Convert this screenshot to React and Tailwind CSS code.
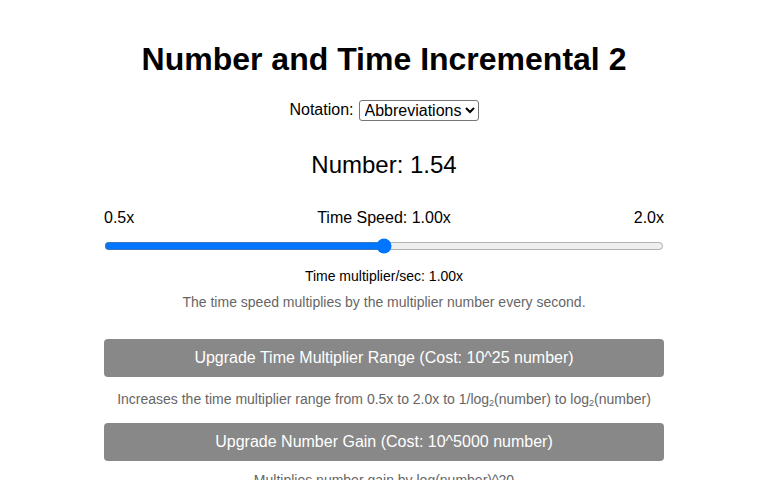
import { useState } from 'react'

export default function App() {
  const [notation, setNotation] = useState('abbr')
  const [speed, setSpeed] = useState(50)

  return (
    <div className="min-h-screen bg-white text-black font-['Liberation_Sans',Arial,sans-serif]">
      <div className="mx-auto w-[560px] pt-[41px] text-center">
        <h1 className="text-[32px] leading-[37px] font-bold">Number and Time Incremental 2</h1>

        <div className="mt-[20px] flex h-6 items-center justify-center gap-[5px] text-base">
          <label htmlFor="notation">Notation:</label>
          <select
            id="notation"
            value={notation}
            onChange={(e) => setNotation(e.target.value)}
            className="h-[21px] rounded-[3px] border border-[#767676] bg-white pl-[1px] pr-0 text-base leading-[19px] font-['Liberation_Sans',Arial,sans-serif]"
          >
            <option value="abbr">Abbreviations</option>
            <option value="sci">Scientific</option>
          </select>
        </div>

        <p className="mt-[29px] text-2xl leading-[28px]">Number: 1.54</p>

        <div className="mt-[30px] flex items-center justify-between text-base leading-[18px]">
          <span>0.5x</span>
          <span>Time Speed: 1.00x</span>
          <span>2.0x</span>
        </div>

        <input
          type="range"
          min="0"
          max="100"
          value={speed}
          onChange={(e) => setSpeed(Number(e.target.value))}
          className="mt-[11px] m-0 block h-4 w-full"
        />

        <p className="mt-[14px] text-sm leading-4">Time multiplier/sec: 1.00x</p>
        <p className="mt-[10px] text-sm leading-4 text-[#666]">The time speed multiplies by the multiplier number every second.</p>

        <button className="mt-[29px] h-[38px] w-full rounded-[4px] bg-[#888] text-base text-white">
          Upgrade Time Multiplier Range (Cost: 10^25 number)
        </button>
        <p className="mt-[14px] text-sm leading-4 text-[#666]">
          Increases the time multiplier range from 0.5x to 2.0x to 1/log<sub className="text-[9px]">2</sub>(number) to log<sub className="text-[9px]">2</sub>(number)
        </p>

        <button className="mt-[16px] h-[38px] w-full rounded-[4px] bg-[#888] text-base text-white">
          Upgrade Number Gain (Cost: 10^5000 number)
        </button>
        <p className="mt-[11px] text-sm leading-4 text-[#666]">Multiplies number gain by log(number)^20</p>
      </div>
    </div>
  )
}
